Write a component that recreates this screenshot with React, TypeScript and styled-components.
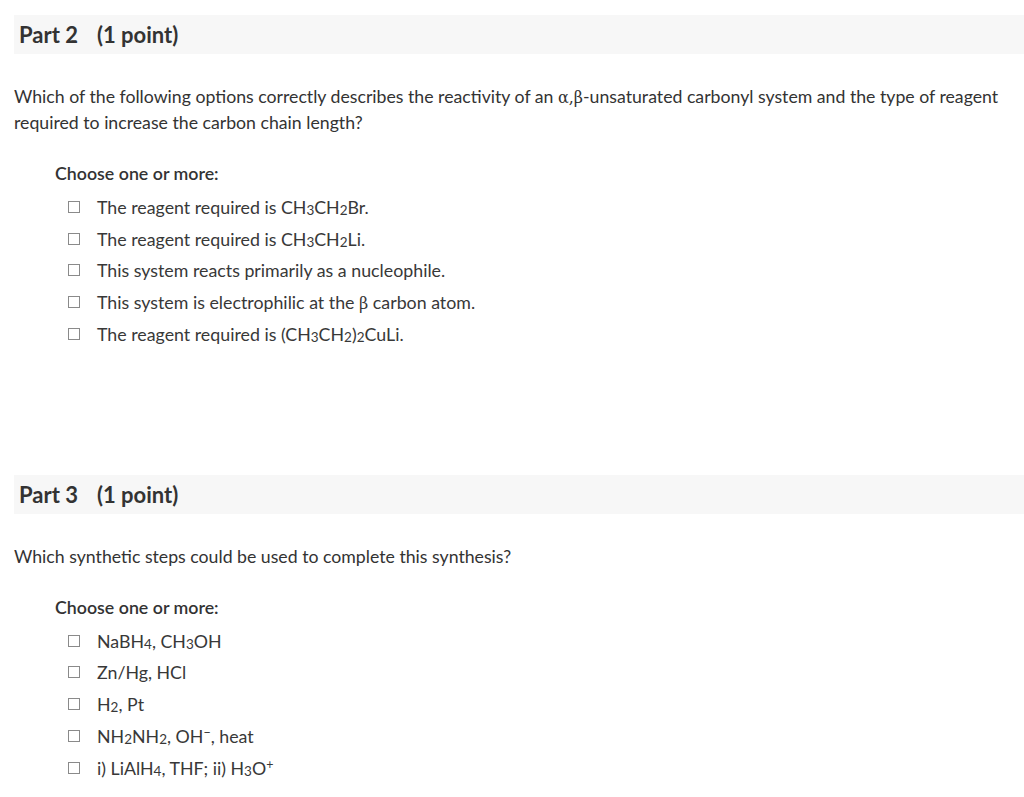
import React from "react";
import styled, { createGlobalStyle } from "styled-components";

const Global = createGlobalStyle`
  html, body { margin: 0; padding: 0; background: #ffffff; }
  body { font-family: Lato, "Open Sans", Arial, sans-serif; color: #333333; }
`;

const Page = styled.div`
  padding: 15px 0 0 14px;
  display: flex;
  flex-direction: column;
`;

const Part = styled.section`
  display: flex;
  flex-direction: column;
  & + & { margin-top: 125px; }
`;

const Header = styled.div`
  height: 39px;
  background: #f7f7f7;
  display: flex;
  align-items: center;
  padding-left: 5px;
  font-size: 22px;
  font-weight: 700;
  color: #333;
  gap: 19px;
`;

const Question = styled.p`
  margin: 30px 0 0 0;
  font-size: 17.7px;
  line-height: 25px;
  color: #333;
  padding-right: 14px;
`;

const Choose = styled.div`
  margin-top: 26px;
  padding-left: 41px;
  font-size: 17.8px;
  line-height: 24px;
  font-weight: 600;
  color: #333;
`;

const Options = styled.ul`
  list-style: none;
  margin: 6px 0 0 0;
  padding: 0 0 0 54px;
  display: flex;
  flex-direction: column;
`;

const Option = styled.li`
  height: 31.75px;
  display: flex;
  align-items: center;
  gap: 17px;
  font-size: 17.8px;
  color: #383838;
`;

const Box = styled.span`
  width: 12px;
  height: 12px;
  border: 1px solid #8a8a8a;
  background: #fff;
  flex: none;
  box-sizing: border-box;
`;

const Sub = styled.span`
  font-size: 0.76em;
  position: relative;
  top: 0.1em;
`;

const Sup = styled.span`
  font-size: 0.7em;
  vertical-align: 0.45em;
`;

const Greek = styled.span`
  font-family: "DejaVu Serif", "Liberation Serif", serif;
  font-size: 0.9em;
`;

const opts2: React.ReactNode[] = [
  <>The reagent required is CH<Sub>3</Sub>CH<Sub>2</Sub>Br.</>,
  <>The reagent required is CH<Sub>3</Sub>CH<Sub>2</Sub>Li.</>,
  <>This system reacts primarily as a nucleophile.</>,
  <>This system is electrophilic at the <Greek>β</Greek> carbon atom.</>,
  <>The reagent required is (CH<Sub>3</Sub>CH<Sub>2</Sub>)<Sub>2</Sub>CuLi.</>,
];

const opts3: React.ReactNode[] = [
  <>NaBH<Sub>4</Sub>, CH<Sub>3</Sub>OH</>,
  <>Zn/Hg, HCl</>,
  <>H<Sub>2</Sub>, Pt</>,
  <>NH<Sub>2</Sub>NH<Sub>2</Sub>, OH<Sup>−</Sup>, heat</>,
  <>i) LiAlH<Sub>4</Sub>, THF; ii) H<Sub>3</Sub>O<Sup>+</Sup></>,
];

function Block({ n, q, opts }: { n: number; q: React.ReactNode; opts: React.ReactNode[] }) {
  return (
    <Part>
      <Header>
        <span>Part {n}</span>
        <span>(1 point)</span>
      </Header>
      <Question>{q}</Question>
      <Choose>Choose one or more:</Choose>
      <Options>
        {opts.map((o, i) => (
          <Option key={i}>
            <Box />
            <span>{o}</span>
          </Option>
        ))}
      </Options>
    </Part>
  );
}

export default function App() {
  return (
    <>
      <Global />
      <Page>
        <Block
          n={2}
          q={
            <>
              Which of the following options correctly describes the reactivity of an <Greek>α,β</Greek>-unsaturated carbonyl system and the type of reagent required to increase the carbon chain length?
            </>
          }
          opts={opts2}
        />
        <Block n={3} q={<>Which synthetic steps could be used to complete this synthesis?</>} opts={opts3} />
      </Page>
    </>
  );
}
